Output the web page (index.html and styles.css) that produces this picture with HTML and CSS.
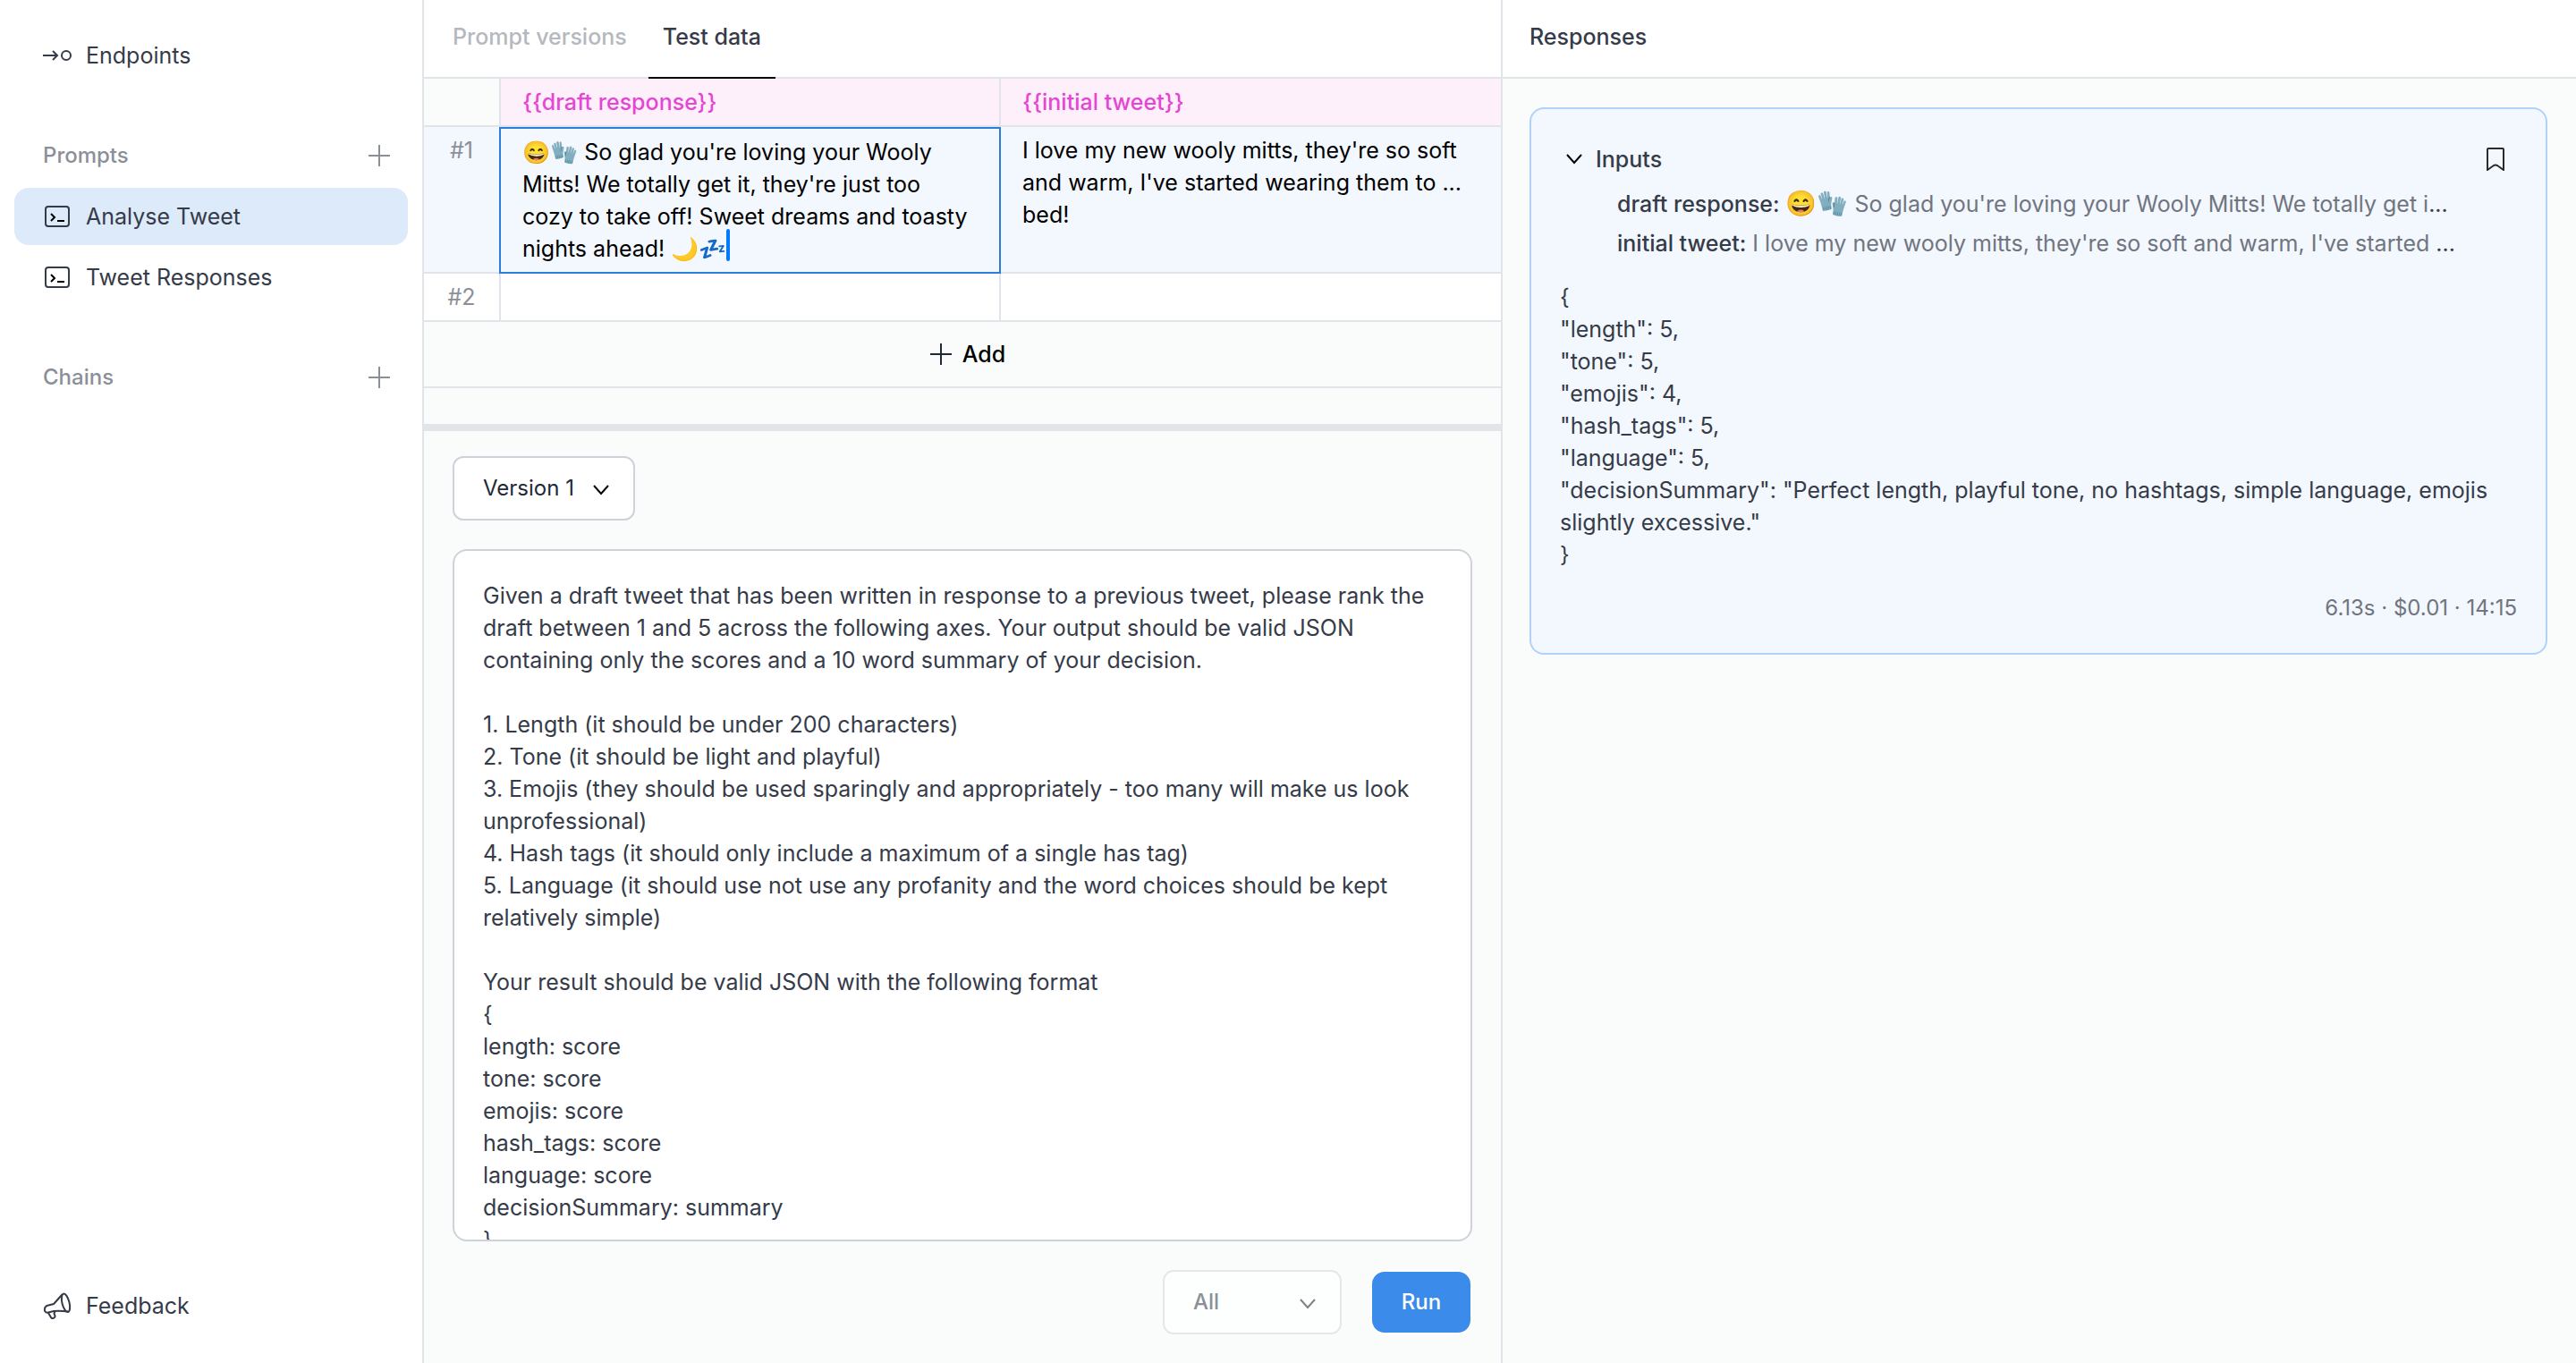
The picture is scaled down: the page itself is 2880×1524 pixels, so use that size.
FILE: index.html
```html
<!DOCTYPE html>
<html lang="en">
<head>
  <meta charset="UTF-8" />
  <title>Analyse Tweet</title>
  <link rel="stylesheet" href="styles.css">
</head>
<body>
  <div class="app">

    <nav class="sidebar">
      <a class="nav-item" href="#">
        <svg class="nav-icon" viewBox="0 0 32 32"><path d="M0 16h16M11 11l5 5-5 5" /><circle cx="26" cy="16" r="5" /></svg>
        Endpoints
      </a>

      <div class="nav-heading">
        <h2>Prompts</h2>
        <button class="icon-btn" aria-label="Add prompt">
          <svg class="plus" viewBox="0 0 24 24"><path d="M12 0v24M0 12h24" /></svg>
        </button>
      </div>
      <a class="nav-item active" href="#">
        <svg class="nav-icon" viewBox="0 0 32 32"><rect x="3" y="5" width="26" height="22" rx="3" /><path class="ink" d="M9 13l4 4-4 4M16 21h8" /></svg>
        Analyse Tweet
      </a>
      <a class="nav-item" href="#">
        <svg class="nav-icon" viewBox="0 0 32 32"><rect x="3" y="5" width="26" height="22" rx="3" /><path class="ink" d="M9 13l4 4-4 4M16 21h8" /></svg>
        Tweet Responses
      </a>

      <div class="nav-heading">
        <h2>Chains</h2>
        <button class="icon-btn" aria-label="Add chain">
          <svg class="plus" viewBox="0 0 24 24"><path d="M12 0v24M0 12h24" /></svg>
        </button>
      </div>

      <a class="nav-item feedback" href="#">
        <svg class="nav-icon" viewBox="0 0 32 32">
          <path d="M22 3C18 7 15 11 12 14L6 15.500C0 17 1 25 6 23.500L12 22Q20 21.500 28 22.500" />
          <ellipse cx="25.500" cy="12.800" rx="4" ry="10.500" transform="rotate(-14 25.500 12.800)" />
          <path d="M6 24l3 5c1 2 5 1 4.500-2l-1-2 1-3" />
        </svg>
        Feedback
      </a>
    </nav>

    <main class="editor">
      <header class="topbar tabs">
        <button class="tab">Prompt versions</button>
        <button class="tab selected">Test data</button>
      </header>

      <table class="data">
        <thead>
          <tr>
            <th class="num"></th>
            <th>{{draft response}}</th>
            <th>{{initial tweet}}</th>
          </tr>
        </thead>
        <tbody>
          <tr class="current">
            <td class="num">#1</td>
            <td class="editing">
              <textarea class="cell-input" rows="4" aria-label="draft response">😄🧤 So glad you're loving your Wooly Mitts! We totally get it, they're just too cozy to take off! Sweet dreams and toasty nights ahead! 🌙💤</textarea>
              <span class="caret"></span>
            </td>
            <td>I love my new wooly mitts, they're so soft and warm, I've started wearing them to ... bed!</td>
          </tr>
          <tr>
            <td class="num">#2</td>
            <td></td>
            <td></td>
          </tr>
        </tbody>
      </table>
      <button class="add-row">
        <svg class="add-icon" viewBox="0 0 48 24"><path d="M24 0v24M12 12h24" /></svg>Add
      </button>
      <div class="splitter"></div>

      <section class="prompt">
        <div class="select version">
          <select aria-label="Version"><option>Version 1</option></select>
          <svg class="chevron" viewBox="0 0 20 12"><path d="M2 1l8 9 8-9" /></svg>
        </div>

        <textarea class="prompt-text" aria-label="Prompt">Given a draft tweet that has been written in response to a previous tweet, please rank the draft between 1 and 5 across the following axes. Your output should be valid JSON containing only the scores and a 10 word summary of your decision.

1. Length (it should be under 200 characters)
2. Tone (it should be light and playful)
3. Emojis (they should be used sparingly and appropriately - too many will make us look unprofessional)
4. Hash tags (it should only include a maximum of a single has tag)
5. Language (it should use not use any profanity and the word choices should be kept relatively simple)

Your result should be valid JSON with the following format
{
length: score
tone: score
emojis: score
hash_tags: score
language: score
decisionSummary: summary
}</textarea>

        <div class="actions">
          <div class="select scope">
            <select aria-label="Rows to run" disabled><option>All</option></select>
            <svg class="chevron" viewBox="0 0 20 12"><path d="M2 1l8 9 8-9" /></svg>
          </div>
          <button class="run">Run</button>
        </div>
      </section>
    </main>

    <aside class="responses">
      <header class="topbar"><h1>Responses</h1></header>
      <article class="card">
        <div class="card-head">
          <button class="toggle">
            <svg class="chevron" viewBox="0 0 20 12"><path d="M2 1l8 9 8-9" /></svg>
            Inputs
          </button>
          <button class="icon-btn" aria-label="Bookmark">
            <svg class="bookmark" viewBox="0 0 20 26"><path d="M1 2q0-1 1-1h16q1 0 1 1v23l-7-5q-2-1-4 0l-7 5z" /></svg>
          </button>
        </div>
        <p class="input-line"><b>draft response:</b> <span><span class="emoji">😄🧤</span> So glad you're loving your Wooly Mitts! We totally get i</span>...</p>
        <p class="input-line"><b>initial tweet:</b> <span>I love my new wooly mitts, they're so soft and warm, I've started </span>...</p>
        <div class="output">{
"length": 5,
"tone": 5,
"emojis": 4,
"hash_tags": 5,
"language": 5,
"decisionSummary": "Perfect length, playful tone, no hashtags, simple language, emojis slightly excessive."
}</div>
        <footer class="meta">6.13s · $0.01 · 14:15</footer>
      </article>
    </aside>

  </div>
</body>
</html>
```
FILE: styles.css
```css
* {
  box-sizing: border-box;
}
body {
  margin: 0;
  font-family: Inter, "Noto Color Emoji", sans-serif;
  font-size: 25px;
  line-height: 36px;
  color: #353b48;
  background: #fafcfb;
}
h1, h2, p {
  margin: 0;
  font-size: inherit;
  font-weight: 500;
}
button, select, textarea {
  font: inherit;
  color: inherit;
  margin: 0;
}
button {
  padding: 0;
  border: none;
  background: none;
  cursor: pointer;
}
svg {
  display: block;
  fill: none;
  stroke: currentColor;
  stroke-width: 2;
  flex: none;
}
.app {
  display: grid;
  grid-template-columns: 474px 602fr 601fr;
  height: 100vh;
}

/* Sidebar */
.sidebar {
  display: flex;
  flex-direction: column;
  gap: 4px;
  padding: 30px 16px 32px;
  background: #fff;
  border-right: 2px solid #e1e4e8;
}
.nav-item {
  display: flex;
  align-items: center;
  gap: 16px;
  height: 64px;
  padding: 0 32px;
  border-radius: 16px;
  color: inherit;
  text-decoration: none;
}
.nav-item.active {
  background: #dceaf9;
}
.nav-icon {
  width: 32px;
  height: 32px;
}
.nav-icon .ink {
  stroke: #000;
}
.nav-heading {
  display: flex;
  align-items: center;
  justify-content: space-between;
  height: 64px;
  margin-top: 44px;
  padding: 0 20px 0 32px;
  font-size: 24px;
  color: #8b9098;
}
.icon-btn {
  display: flex;
}
.plus {
  width: 24px;
  height: 24px;
}
.feedback {
  margin-top: auto;
}

/* Top bars */
.topbar {
  display: flex;
  height: 88px;
  padding: 0 30px 4px;
  background: #fff;
  border-bottom: 2px solid #e1e4e8;
  align-items: center;
  flex: none;
}
.tabs {
  gap: 8px;
  padding: 0 16px;
  align-items: stretch;
}
.tab {
  padding: 0 16px 4px;
  margin-bottom: -2px;
  border-bottom: 2px solid transparent;
  font-weight: 500;
  color: #b5b8bf;
}
.tab.selected {
  color: #353b48;
  border-bottom-color: #000;
}

/* Test data table */
.editor {
  display: flex;
  flex-direction: column;
  min-width: 0;
  min-height: 0;
}
.data {
  width: 100%;
  table-layout: fixed;
  border-spacing: 0;
  color: #000;
}
.data th, .data td {
  height: 54px;
  padding: 8px 24px;
  border-bottom: 2px solid #e1e4e8;
  border-right: 2px solid #e1e4e8;
  text-align: left;
  vertical-align: top;
  background: #fff;
}
.data th:last-child, .data td:last-child {
  border-right: none;
}
.data th {
  font-weight: 500;
  color: #e546d4;
  background: #fdf0fb;
}
.data .num {
  width: 86px;
  padding: 8px 0;
  text-align: center;
  color: #8b9098;
}
.data th.num {
  background: #fafcfb;
}
.data .current td {
  background: #f3f7fe;
}
.data .editing {
  position: relative;
  padding: 2px 0 0;
}
.cell-input {
  display: block;
  width: 100%;
  height: 160px;
  padding: 8px 32px 8px 24px;
  border: none;
  outline: 2px solid #2e7cdb;
  background: none;
  resize: none;
  overflow: hidden;
}
.caret {
  position: absolute;
  left: 252px;
  bottom: 12px;
  width: 4px;
  height: 36px;
  border-radius: 2px;
  background: #007aff;
}
.add-row {
  display: flex;
  align-items: center;
  justify-content: center;
  height: 74px;
  border-bottom: 2px solid #e1e4e8;
  font-weight: 500;
  color: #000;
  flex: none;
}
.add-icon {
  width: 48px;
  height: 24px;
  stroke: #1f2937;
}
.splitter {
  height: 8px;
  margin-top: 40px;
  background: #e1e4e8;
  flex: none;
}

/* Prompt editor */
.prompt {
  display: flex;
  flex-direction: column;
  align-items: flex-start;
  gap: 32px;
  flex: 1;
  min-height: 0;
  padding: 28px 32px 32px;
}
.select {
  position: relative;
}
.select select {
  appearance: none;
  width: 100%;
  height: 72px;
  padding: 0 32px;
  border: 2px solid #cfd2d9;
  border-radius: 12px;
  background: #fff;
  font-size: 24px;
  color: #1f2937;
  opacity: 1;
}
.chevron {
  width: 20px;
  height: 12px;
  stroke: #000;
}
.select .chevron {
  position: absolute;
  right: 28px;
  top: 32px;
  pointer-events: none;
}
.version {
  width: 204px;
}
.scope {
  width: 200px;
}
.scope select {
  border-color: #e5e7e9;
  background: #fdfefe;
  font-weight: 500;
  color: #8b9098;
}
.scope .chevron {
  stroke: #808080;
}
.prompt-text {
  width: 100%;
  flex: 1;
  min-height: 0;
  padding: 32px 32px 0;
  border: 2px solid #cfd2d9;
  border-radius: 16px;
  background: #fff;
  resize: none;
  overflow: hidden;
}
.actions {
  display: flex;
  gap: 32px;
  align-self: flex-end;
}
.run {
  width: 114px;
  height: 72px;
  border: 2px solid #fff;
  border-radius: 16px;
  background: #3b8beb;
  font-size: 24px;
  font-weight: 500;
  color: #fff;
}

/* Responses */
.responses {
  border-left: 2px solid #e1e4e8;
  min-width: 0;
}
.card {
  margin: 32px 32px 32px 30px;
  padding: 38px 32px 32px;
  border: 2px solid #b0d2f9;
  border-radius: 16px;
  background: #f3f7fe;
}
.card-head {
  display: flex;
  justify-content: space-between;
  align-items: center;
  padding: 0 14px 0 6px;
}
.toggle {
  display: flex;
  align-items: center;
  gap: 14px;
  font-weight: 500;
}
.bookmark {
  width: 20px;
  height: 26px;
  color: #2b2b2b;
}
.input-line {
  height: 36px;
  margin: 14px 64px 0;
  font-weight: 400;
  white-space: nowrap;
}
.input-line + .input-line {
  margin-top: 8px;
}
.input-line b {
  font-weight: 500;
}
.input-line span {
  color: #70757f;
}
.input-line .emoji {
  font-size: 28px;
  line-height: 24px;
}
.output {
  margin-top: 24px;
  white-space: pre-wrap;
}
.meta {
  margin-top: 24px;
  text-align: right;
  font-size: 24px;
  color: #70757f;
}
```
